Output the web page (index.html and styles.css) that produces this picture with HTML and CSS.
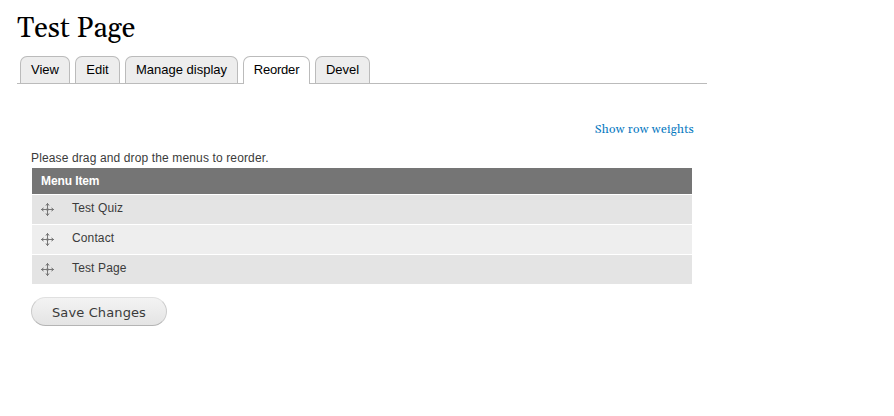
FILE: index.html
```html
<!DOCTYPE html>
<html lang="en">

<head>
    <meta charset="UTF-8">
    <meta name="viewport" content="width=device-width, initial-scale=1.0">
    <title>Test Page</title>
    <link rel="stylesheet" href="styles.css">
</head>

<body>
    <svg class="sprite" width="0" height="0">
        <symbol id="drag" viewBox="0 0 13 13">
            <path d="M6 0h1v13h-1zM0 6h13v1h-13z" />
            <path d="M5 1h3v1h-3zM5 11h3v1h-3zM1 5h1v3h-1zM11 5h1v3h-1z" opacity="0.85" />
            <path d="M4 2h5v1h-5zM4 10h5v1h-5zM2 4h1v5h-1zM10 4h1v5h-1zM5 5h3v3h-3z" opacity="0.3" />
        </symbol>
    </svg>

    <div class="page">
        <h1 class="page-title">Test Page</h1>

        <ul class="tabs">
            <li><a class="tab-view" href="#">View</a></li>
            <li><a class="tab-edit" href="#">Edit</a></li>
            <li><a class="tab-display" href="#">Manage display</a></li>
            <li><a class="tab-reorder active" href="#">Reorder</a></li>
            <li><a class="tab-devel" href="#">Devel</a></li>
        </ul>

        <form class="reorder-form" onsubmit="return false">
            <div class="weights-toggle"><a href="#">Show row weights</a></div>
            <p class="help">Please drag and drop the menus to reorder.</p>

            <table class="menu-table">
                <thead>
                    <tr><th>Menu Item</th></tr>
                </thead>
                <tbody>
                    <tr class="odd">
                        <td><div class="item"><svg class="handle"><use href="#drag" /></svg><span>Test Quiz</span></div></td>
                    </tr>
                    <tr class="even">
                        <td><div class="item"><svg class="handle"><use href="#drag" /></svg><span>Contact</span></div></td>
                    </tr>
                    <tr class="odd">
                        <td><div class="item"><svg class="handle"><use href="#drag" /></svg><span>Test Page</span></div></td>
                    </tr>
                </tbody>
            </table>

            <button class="btn-save" type="submit">Save Changes</button>
        </form>
    </div>
</body>

</html>
```

FILE: styles.css
```css
* {
    margin: 0;
    padding: 0;
    box-sizing: border-box;
}

body {
    background-color: #fff;
    color: #3b3b3b;
    font-family: "Liberation Sans", Arial, sans-serif;
    font-size: 12px;
}

a {
    text-decoration: none;
}

.sprite {
    display: block;
}

.page {
    width: 690px;
    margin-left: 17px;
    padding-top: 12px;
}

.page-title {
    height: 44px;
    color: #000;
    font-family: Georgia, Gelasio, "Liberation Serif", serif;
    font-size: 28px;
    font-weight: normal;
    line-height: 34px;
}

.tabs {
    display: flex;
    gap: 5px;
    height: 28px;
    padding-left: 3px;
    border-bottom: 1px solid #bbb;
    list-style: none;
}

.tabs a {
    display: block;
    height: 27px;
    border: 1px solid #bbb;
    border-bottom: none;
    border-radius: 7px 7px 0 0;
    background-color: #ededed;
    color: #000;
    font-size: 13px;
    line-height: 26px;
    text-align: center;
}

.tabs a.active {
    height: 28px;
    background-color: #fff;
}

.tab-view {
    width: 50px;
}

.tab-edit {
    width: 45px;
}

.tab-display {
    width: 113px;
}

.tab-reorder {
    width: 67px;
    letter-spacing: -0.2px;
}

.tab-devel {
    width: 55px;
}

.reorder-form {
    padding: 36px 14px 0;
}

.weights-toggle {
    height: 30px;
    margin-right: -1px;
    font-family: Georgia, Gelasio, "Liberation Serif", serif;
    font-size: 12px;
    letter-spacing: 0.22px;
    line-height: 20px;
    text-align: right;
}

.weights-toggle a {
    color: #0779bf;
}

.help {
    height: 17px;
    letter-spacing: 0.13px;
    line-height: 16px;
}

.menu-table {
    width: 662px;
    border-collapse: separate;
    border-spacing: 1px;
}

.menu-table th {
    height: 26px;
    padding-left: 9px;
    background-color: #757575;
    color: #fff;
    letter-spacing: -0.1px;
    text-align: left;
}

.menu-table td {
    height: 29px;
    padding-left: 9px;
    vertical-align: top;
}

.odd td {
    background-color: #e4e4e4;
}

.even td {
    background-color: #eee;
}

.item {
    display: flex;
    gap: 18px;
    letter-spacing: 0.13px;
    line-height: 26px;
}

.handle {
    width: 13px;
    height: 13px;
    margin-top: 8px;
    fill: #777;
}

.btn-save {
    display: block;
    width: 136px;
    height: 29px;
    margin-top: 12px;
    padding: 2px 0 0;
    border: 1px solid #ccc;
    border-top-color: #e0e0e0;
    border-bottom-color: #b4b4b4;
    border-radius: 15px;
    background: linear-gradient(#f3f3f3, #e4e4e4);
    color: #3a3a3a;
    font-family: "DejaVu Sans", Verdana, sans-serif;
    font-size: 13px;
    letter-spacing: 0.12px;
    cursor: pointer;
}
```
